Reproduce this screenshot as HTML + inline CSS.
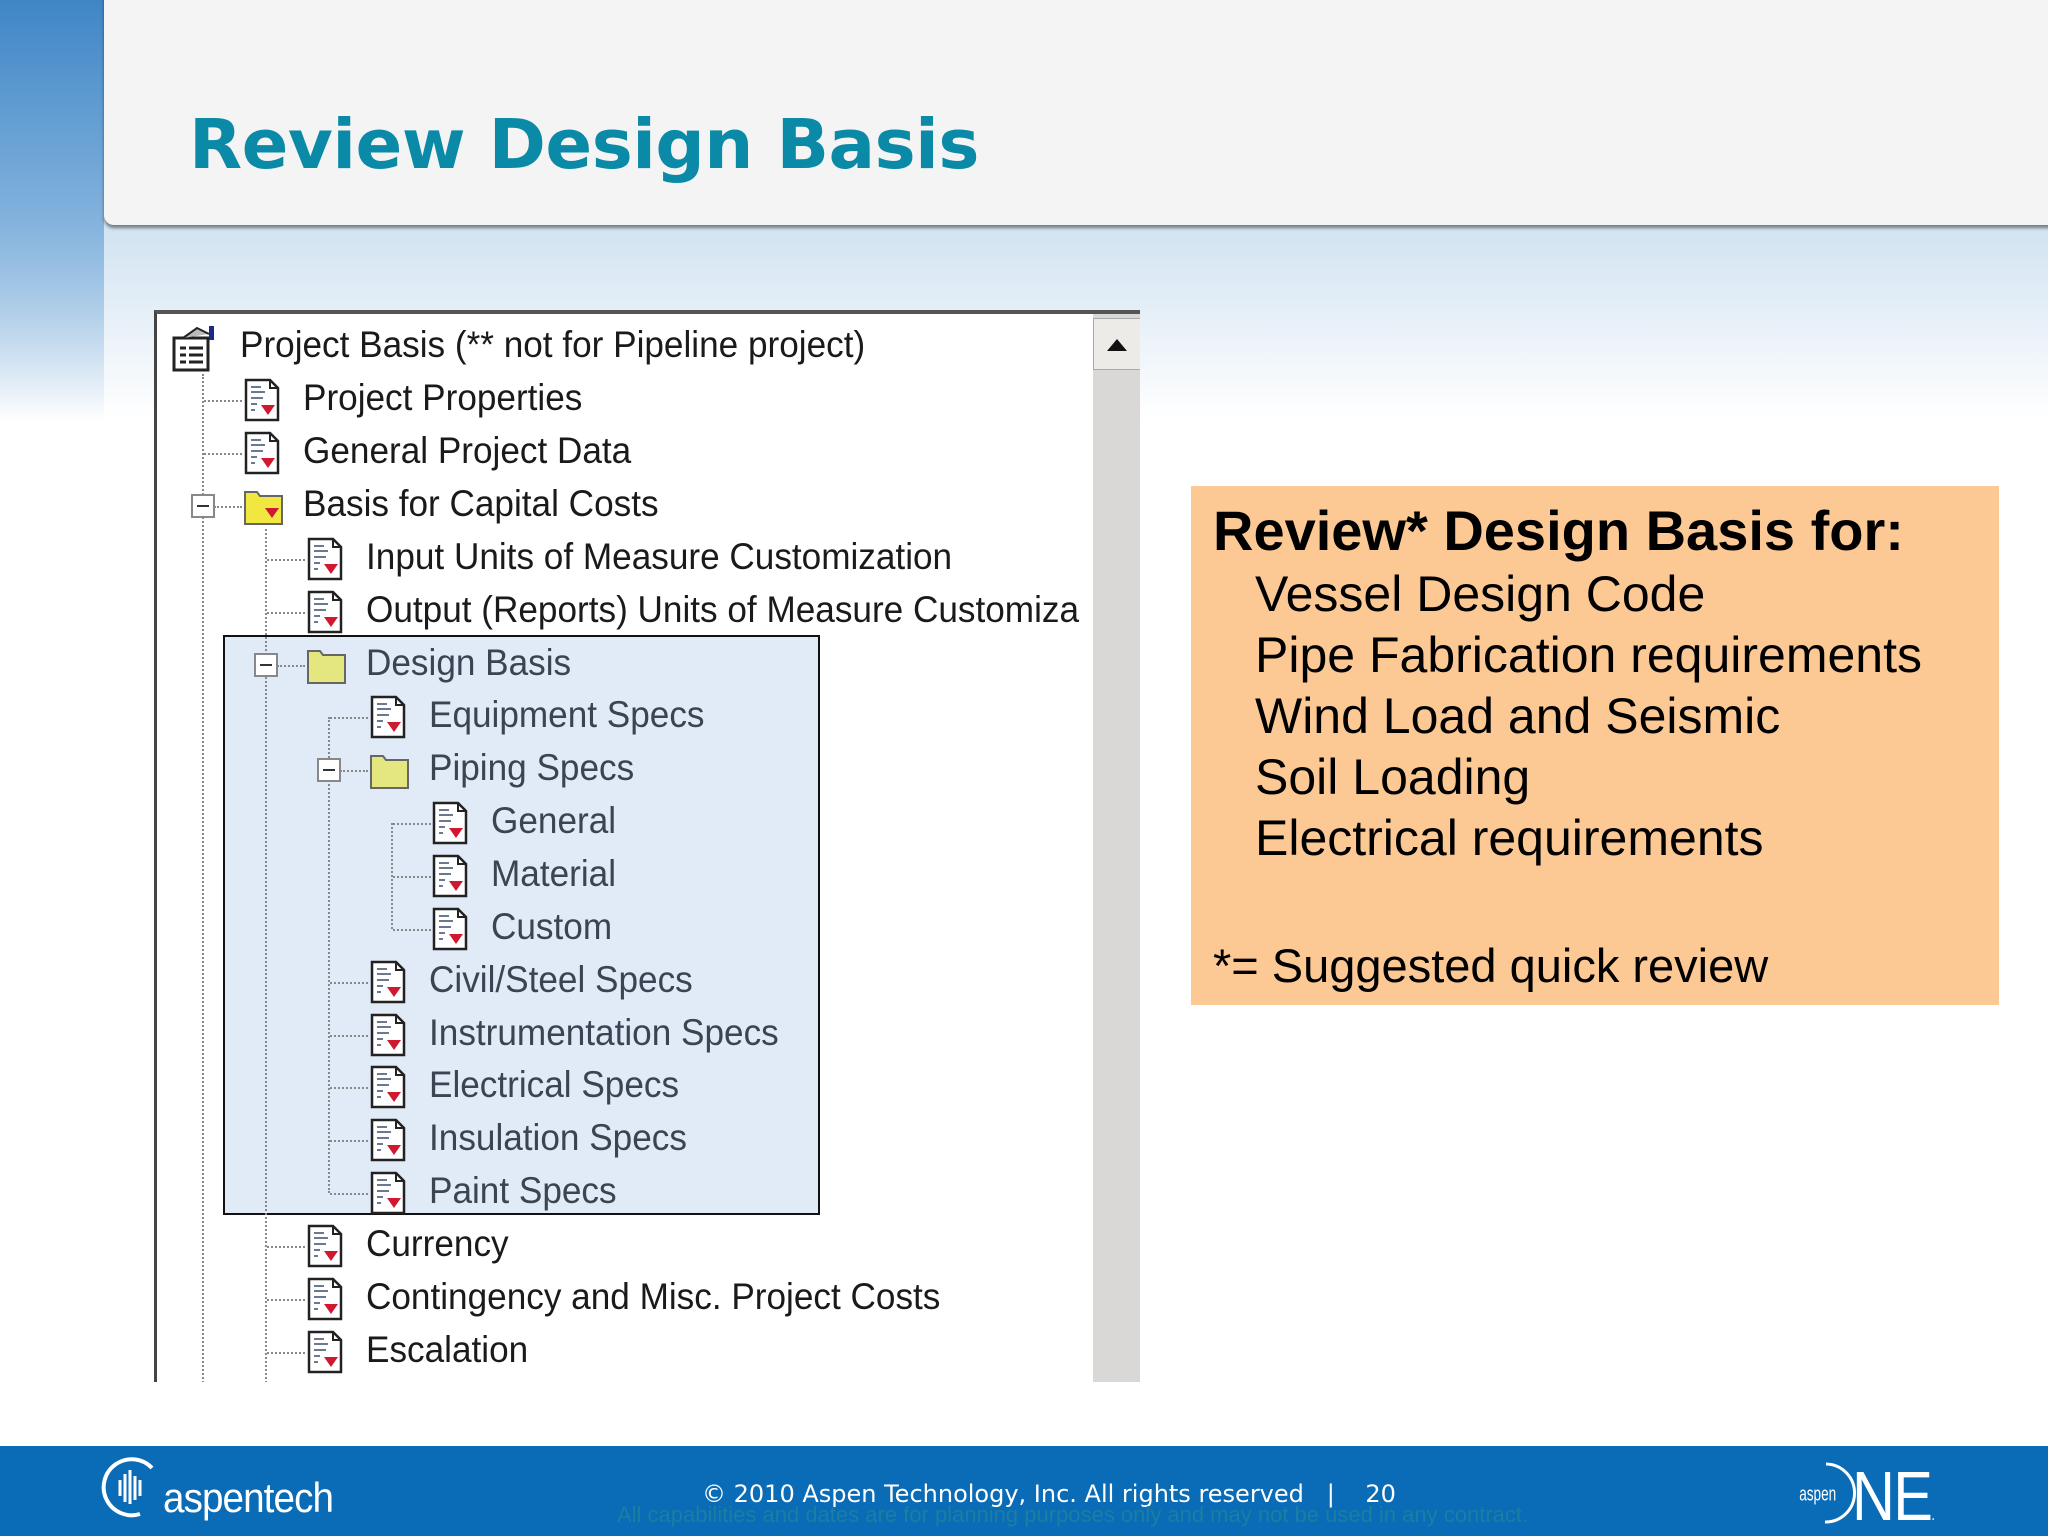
<!DOCTYPE html>
<html><head><meta charset="utf-8"><style>
*{margin:0;padding:0;box-sizing:border-box}
body{width:2048px;height:1536px;overflow:hidden;position:relative;background:#fff;font-family:"Liberation Sans",sans-serif}
.bg{position:absolute;left:0;top:0;width:2048px;height:420px;background:linear-gradient(180deg,#9cc3e3 0%,#c8ddef 45%,#fff 100%)}
.strip{position:absolute;left:0;top:0;width:104px;height:420px;background:linear-gradient(180deg,#3f86c6 0%,#7fb0dc 50%,rgba(255,255,255,0) 100%)}
.hdr{position:absolute;left:104px;top:-10px;width:1960px;height:235px;background:#f4f4f4;border-bottom-left-radius:10px;box-shadow:0 3px 3px rgba(0,0,0,.45)}
.title{position:absolute;left:189px;top:105px;font:bold 69px "DejaVu Sans",sans-serif;color:#0a8aa6;letter-spacing:-0.5px;white-space:nowrap}
.panel{position:absolute;left:154px;top:310px;width:986px;height:1072px;background:#fff;border-top:4px solid #555;border-left:3px solid #444;overflow:hidden}
.sb{position:absolute;left:936px;top:0;width:50px;height:1080px;background:#d9d8d6}
.sbb{position:absolute;left:0;top:4px;width:48px;height:52px;background:#ecebe8;border:1px solid #aaa}
.row{position:absolute;height:52px;line-height:52px;font-size:37px;color:#1a1a1a;white-space:nowrap;transform-origin:left center;transform:scaleX(.95)}
.in{color:#3a4452}
.ic{position:absolute;width:40px;height:44px}
.vl{position:absolute;width:0;border-left:2px dotted #888}
.hl{position:absolute;height:0;border-top:2px dotted #888}
.mb{position:absolute;width:24px;height:24px;border:2px solid #888;background:#fff}
.mb:after{content:"";position:absolute;left:4px;top:9px;width:12px;height:2px;background:#333}
.hi{position:absolute;left:66px;top:321px;width:597px;height:580px;background:#e0ebf7;border:2px solid #111}
.ob{position:absolute;left:1191px;top:486px;width:808px;height:519px;background:#fcc995}
.ob div{position:absolute;white-space:nowrap;color:#000}
.foot{position:absolute;left:0;top:1446px;width:2048px;height:90px;background:#0a6bb6}
</style></head><body>
<div class="bg"></div><div class="strip"></div>
<div class="hdr"></div>
<div class="title">Review Design Basis</div>

<div class="panel">
<svg width="0" height="0" style="position:absolute"><defs>
<g id="doc"><path d="M3 2h24l8 8v32H3z" fill="#fff" stroke="#222" stroke-width="2.5"/><path d="M27 2v8h8" fill="none" stroke="#222" stroke-width="2"/><path d="M8 9h10M8 14h14M8 20h12M8 26h6M8 32h4" stroke="#6a7890" stroke-width="2"/><path d="M18 27h14l-7 10z" fill="#d01830"/></g>
<g id="fold"><path d="M2 8h12l3 4h22v28H2z" fill="#e4e680" stroke="#666" stroke-width="2"/></g>
<g id="foldr"><path d="M2 8h12l3 4h22v28H2z" fill="#f0e840" stroke="#666" stroke-width="2"/><path d="M22 24h14l-7 10z" fill="#d01830"/></g>
</defs></svg>
<div class="hi"></div>
<div class="vl" style="left:45px;top:60px;height:1020px"></div>
<div class="vl" style="left:108px;top:215px;height:870px"></div>
<div class="vl" style="left:171px;top:403px;height:476px"></div>
<div class="vl" style="left:234px;top:509px;height:106px"></div>
<div class="hl" style="left:47px;top:86px;width:38px"></div>
<div class="hl" style="left:47px;top:139px;width:38px"></div>
<div class="hl" style="left:57px;top:192px;width:28px"></div>
<div class="hl" style="left:110px;top:245px;width:38px"></div>
<div class="hl" style="left:110px;top:298px;width:38px"></div>
<div class="hl" style="left:120px;top:351px;width:28px"></div>
<div class="hl" style="left:173px;top:403px;width:38px"></div>
<div class="hl" style="left:183px;top:456px;width:28px"></div>
<div class="hl" style="left:236px;top:509px;width:38px"></div>
<div class="hl" style="left:236px;top:562px;width:38px"></div>
<div class="hl" style="left:236px;top:615px;width:38px"></div>
<div class="hl" style="left:173px;top:668px;width:38px"></div>
<div class="hl" style="left:173px;top:721px;width:38px"></div>
<div class="hl" style="left:173px;top:773px;width:38px"></div>
<div class="hl" style="left:173px;top:826px;width:38px"></div>
<div class="hl" style="left:173px;top:879px;width:38px"></div>
<div class="hl" style="left:110px;top:932px;width:38px"></div>
<div class="hl" style="left:110px;top:985px;width:38px"></div>
<div class="hl" style="left:110px;top:1038px;width:38px"></div>
<div class="mb" style="left:34px;top:180px"></div>
<div class="mb" style="left:97px;top:339px"></div>
<div class="mb" style="left:160px;top:444px"></div>
<svg class="ic" style="left:14px;top:10px;width:48px;height:50px" viewBox="0 0 48 50"><rect x="3" y="14" width="34" height="32" fill="#fff" stroke="#222" stroke-width="3"/><path d="M9 24h6M18 24h14M9 31h6M18 31h14M9 38h6M18 38h14" stroke="#222" stroke-width="3"/><path d="M12 14l14-10 12 6" fill="#bbb" stroke="#222" stroke-width="2"/><rect x="38" y="2" width="5" height="14" fill="#1a2a8a"/></svg>
<svg class="ic" style="left:86px;top:64px"><use href="#doc"/></svg>
<svg class="ic" style="left:86px;top:117px"><use href="#doc"/></svg>
<svg class="ic" style="left:86px;top:170px"><use href="#foldr"/></svg>
<svg class="ic" style="left:149px;top:223px"><use href="#doc"/></svg>
<svg class="ic" style="left:149px;top:276px"><use href="#doc"/></svg>
<svg class="ic" style="left:149px;top:329px"><use href="#fold"/></svg>
<svg class="ic" style="left:212px;top:381px"><use href="#doc"/></svg>
<svg class="ic" style="left:212px;top:434px"><use href="#fold"/></svg>
<svg class="ic" style="left:274px;top:487px"><use href="#doc"/></svg>
<svg class="ic" style="left:274px;top:540px"><use href="#doc"/></svg>
<svg class="ic" style="left:274px;top:593px"><use href="#doc"/></svg>
<svg class="ic" style="left:212px;top:646px"><use href="#doc"/></svg>
<svg class="ic" style="left:212px;top:699px"><use href="#doc"/></svg>
<svg class="ic" style="left:212px;top:751px"><use href="#doc"/></svg>
<svg class="ic" style="left:212px;top:804px"><use href="#doc"/></svg>
<svg class="ic" style="left:212px;top:857px"><use href="#doc"/></svg>
<svg class="ic" style="left:149px;top:910px"><use href="#doc"/></svg>
<svg class="ic" style="left:149px;top:963px"><use href="#doc"/></svg>
<svg class="ic" style="left:149px;top:1016px"><use href="#doc"/></svg>
<div class="row" style="left:83px;top:5px">Project Basis (** not for Pipeline project)</div>
<div class="row" style="left:146px;top:58px">Project Properties</div>
<div class="row" style="left:146px;top:111px">General Project Data</div>
<div class="row" style="left:146px;top:164px">Basis for Capital Costs</div>
<div class="row" style="left:209px;top:217px">Input Units of Measure Customization</div>
<div class="row" style="left:209px;top:270px">Output (Reports) Units of Measure Customiza</div>
<div class="row in" style="left:209px;top:323px">Design Basis</div>
<div class="row in" style="left:272px;top:375px">Equipment Specs</div>
<div class="row in" style="left:272px;top:428px">Piping Specs</div>
<div class="row in" style="left:334px;top:481px">General</div>
<div class="row in" style="left:334px;top:534px">Material</div>
<div class="row in" style="left:334px;top:587px">Custom</div>
<div class="row in" style="left:272px;top:640px">Civil/Steel Specs</div>
<div class="row in" style="left:272px;top:693px">Instrumentation Specs</div>
<div class="row in" style="left:272px;top:745px">Electrical Specs</div>
<div class="row in" style="left:272px;top:798px">Insulation Specs</div>
<div class="row in" style="left:272px;top:851px">Paint Specs</div>
<div class="row" style="left:209px;top:904px">Currency</div>
<div class="row" style="left:209px;top:957px">Contingency and Misc. Project Costs</div>
<div class="row" style="left:209px;top:1010px">Escalation</div>
<div class="sb"><div class="sbb"><svg width="46" height="50"><path d="M13 32h20l-10-12z" fill="#111"/></svg></div></div>
</div>

<div class="ob">
<div style="left:22px;top:12px;font-weight:bold;font-size:56px">Review* Design Basis for:</div>
<div style="left:64px;top:79px;font-size:50px">Vessel Design Code</div>
<div style="left:64px;top:140px;font-size:50px">Pipe Fabrication requirements</div>
<div style="left:64px;top:201px;font-size:50px">Wind Load and Seismic</div>
<div style="left:64px;top:262px;font-size:50px">Soil Loading</div>
<div style="left:64px;top:323px;font-size:50px">Electrical requirements</div>
<div style="left:22px;top:452px;font-size:47px">*= Suggested quick review</div>
</div>

<div class="foot">
<svg style="position:absolute;left:100px;top:4px" width="70" height="80" viewBox="0 0 70 80"><path d="M52 18A28 28 0 1 0 40 64" fill="none" stroke="#fff" stroke-width="4"/><path d="M20 30v16M25 24v28M30 20v34M35 26v24M40 30v16" stroke="#fff" stroke-width="3"/></svg>
<div style="position:absolute;left:163px;top:28px;color:#fff;font-size:42px;letter-spacing:-1px;transform:scaleX(.92);transform-origin:left">aspentech</div>
<div style="position:absolute;left:702px;top:34px;color:#fff;font:24px 'DejaVu Sans',sans-serif;white-space:nowrap">© 2010 Aspen Technology, Inc. All rights reserved &nbsp;&nbsp;| &nbsp;&nbsp;&nbsp;20</div>
<div style="position:absolute;left:617px;top:56px;color:#1a7fa0;font-size:22px;white-space:nowrap">All capabilities and dates are for planning purposes only and may not be used in any contract.</div>
<svg style="position:absolute;left:1796px;top:16px" width="60" height="62" viewBox="0 0 60 62"><path d="M30 2A29 29 0 1 1 29 60" fill="none" stroke="#fff" stroke-width="3"/><text x="4" y="38" font-family="Liberation Sans" font-size="17" fill="#fff" transform="scale(.8 1.2) translate(0 -6)">aspen</text></svg>
<div style="position:absolute;left:1852px;top:10px;color:#fff;font-size:70px;letter-spacing:-2px;transform:scaleX(.85);transform-origin:left">NE<span style="font-size:16px">.</span></div>
</div>
</body></html>
